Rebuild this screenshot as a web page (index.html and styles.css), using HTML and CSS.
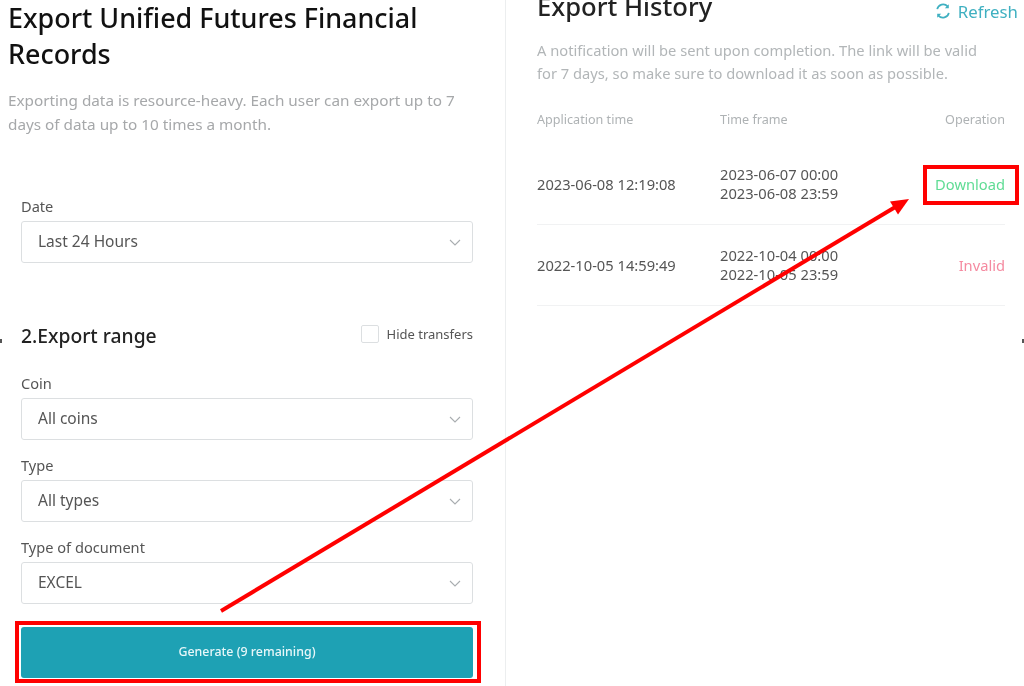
FILE: index.html
```html
<!DOCTYPE html>
<html lang="en">
<head>
<meta charset="utf-8">
<title>Export Unified Futures Financial Records</title>
<link rel="stylesheet" href="styles.css">
</head>
<body>
<main class="page">
  <section class="left">
    <h1 class="title">Export Unified Futures Financial Records</h1>
    <p class="desc">Exporting data is resource-heavy. Each user can export up to 7 days of data up to 10 times a month.</p>
    <div class="form">
      <div class="field field-date">
        <label class="label">Date</label>
        <div class="select"><span>Last 24 Hours</span><svg class="chev" viewBox="0 0 12 7"><path d="M1 1l5 5 5-5"/></svg></div>
      </div>
      <div class="range-head">
        <h2 class="range-title">2.Export range</h2>
        <div class="check"><span class="box"></span><span>Hide transfers</span></div>
      </div>
      <div class="field">
        <label class="label">Coin</label>
        <div class="select"><span>All coins</span><svg class="chev" viewBox="0 0 12 7"><path d="M1 1l5 5 5-5"/></svg></div>
      </div>
      <div class="field">
        <label class="label">Type</label>
        <div class="select"><span>All types</span><svg class="chev" viewBox="0 0 12 7"><path d="M1 1l5 5 5-5"/></svg></div>
      </div>
      <div class="field">
        <label class="label">Type of document</label>
        <div class="select"><span>EXCEL</span><svg class="chev" viewBox="0 0 12 7"><path d="M1 1l5 5 5-5"/></svg></div>
      </div>
      <button class="generate">Generate (9 remaining)</button>
    </div>
  </section>
  <section class="right">
    <div class="hist-head">
      <h2 class="hist-title">Export History</h2>
      <div class="refresh">
        <svg class="refresh-icon" viewBox="0 0 16 16"><path d="M2.200 6.200A6 6 0 0 1 12.600 3.400"/><path d="M13.800 9.800A6 6 0 0 1 3.400 12.600"/><path class="fill" d="M13.800 1.200v4h-4zM2.200 14.800v-4h4z"/></svg>
        <span>Refresh</span>
      </div>
    </div>
    <p class="notice">A notification will be sent upon completion. The link will be valid for 7 days, so make sure to download it as soon as possible.</p>
    <div class="table">
      <div class="row head"><span>Application time</span><span>Time frame</span><span class="op">Operation</span></div>
      <div class="row item">
        <span>2023-06-08 12:19:08</span>
        <span class="frame"><span>2023-06-07 00:00</span><span>2023-06-08 23:59</span></span>
        <span class="op ok">Download</span>
      </div>
      <div class="row item">
        <span>2022-10-05 14:59:49</span>
        <span class="frame"><span>2022-10-04 00:00</span><span>2022-10-05 23:59</span></span>
        <span class="op bad">Invalid</span>
      </div>
    </div>
  </section>
  <span class="speck speck-l"></span>
  <span class="speck speck-r"></span>
  <span class="mark mark-btn"></span>
  <span class="mark mark-dl"></span>
  <svg class="arrow" viewBox="0 0 1024 686"><path class="shaft" d="M221 611L897 206"/><path class="tip" d="M909 199L890 201.500L898 214.500z"/></svg>
</main>
</body>
</html>
```
FILE: styles.css
```css
* { box-sizing: border-box; }
html, body { margin: 0; height: 100%; overflow: hidden; background: #fff; }
body { font-family: "Noto Sans", sans-serif; color: #333; }
.page { position: relative; display: flex; width: 1024px; height: 686px; overflow: hidden; filter: blur(0.35px); }
.left { width: 506px; height: 686px; flex: none; border-right: 1px solid #eceeef; }
.title { margin: 0; padding-left: 8px; width: 470px; font-size: 26.900px; line-height: 35.500px; font-weight: 500; color: #111; }
.desc { margin: 17px 0 0; padding-left: 8px; width: 480px; font-size: 15.300px; line-height: 24px; color: #a6a8aa; }
.form { padding: 0 32px 0 21px; margin-top: 60px; }
.field { display: flex; flex-direction: column; margin-bottom: 15px; }
.field-date { margin-bottom: 61px; }
.label { font-size: 14.600px; line-height: 20px; color: #555; margin-bottom: 5px; }
.select { height: 42px; display: flex; align-items: center; justify-content: space-between; padding: 0 11px 0 16px; border: 1px solid #dcdfe1; border-radius: 3px; font-size: 15.500px; color: #555; }
.select span { position: relative; top: -1px; }
.chev { width: 12px; height: 7px; fill: none; stroke: #a9adb0; stroke-width: 1.100; }
.range-head { display: flex; justify-content: space-between; align-items: center; height: 24px; margin-bottom: 25px; }
.range-title { margin: 0; font-size: 19.300px; font-weight: 500; line-height: 24px; color: #222; }
.check { display: flex; align-items: center; gap: 8px; margin-bottom: 4px; font-size: 13px; color: #555; }
.box { width: 18px; height: 18px; border: 1px solid #dcdfe1; border-radius: 2px; }
.generate { display: block; width: 100%; height: 51px; margin-top: 23px; border: 0; border-radius: 3px; background: #1ea1b4; color: #e8f7f9; font: 500 12.400px/1 "Noto Sans", sans-serif; }
.right { flex: 1; padding: 0 19px 0 31px; }
.hist-head { display: flex; justify-content: space-between; align-items: center; height: 32px; margin-top: -9px; }
.hist-title { margin: 0; font-size: 25.600px; line-height: 32px; font-weight: 500; color: #222; white-space: nowrap; }
.refresh { display: flex; align-items: center; gap: 7px; font-size: 16.800px; color: #3fb0c1; margin-right: -13px; position: relative; top: 4px; }
.refresh-icon { width: 16px; height: 16px; fill: none; stroke: #3fb0c1; stroke-width: 1.700; }
.refresh-icon .fill { fill: #3fb0c1; stroke: none; }
.notice { margin: 16px 0 0; font-size: 14.700px; line-height: 23px; color: #b2b6b8; width: 450px; }
.table { margin-top: 22px; }
.row { display: grid; grid-template-columns: 183px 1fr auto; align-items: center; }
.head { height: 37px; font-size: 12.600px; color: #aeb2b4; padding-bottom: 13px; }
.item { height: 81px; font-size: 14.700px; color: #555; border-bottom: 1px solid #f1f2f3; }
.frame { display: flex; flex-direction: column; line-height: 19px; }
.op { text-align: right; }
.ok { color: #5fdc94; }
.bad { color: #f58aa0; }
.mark { position: absolute; border: 4px solid #f00; }
.mark-btn { left: 15px; top: 621px; width: 466px; height: 62px; }
.mark-dl { left: 923px; top: 165px; width: 96px; height: 40px; }
.arrow { position: absolute; left: 0; top: 0; width: 1024px; height: 686px; pointer-events: none; }
.shaft { stroke: #f00; stroke-width: 4; fill: none; }
.tip { fill: #f00; }
.speck { position: absolute; top: 339px; width: 2px; height: 4px; background: #555; }
.speck-l { left: 0; }
.speck-r { right: 0; }
```
